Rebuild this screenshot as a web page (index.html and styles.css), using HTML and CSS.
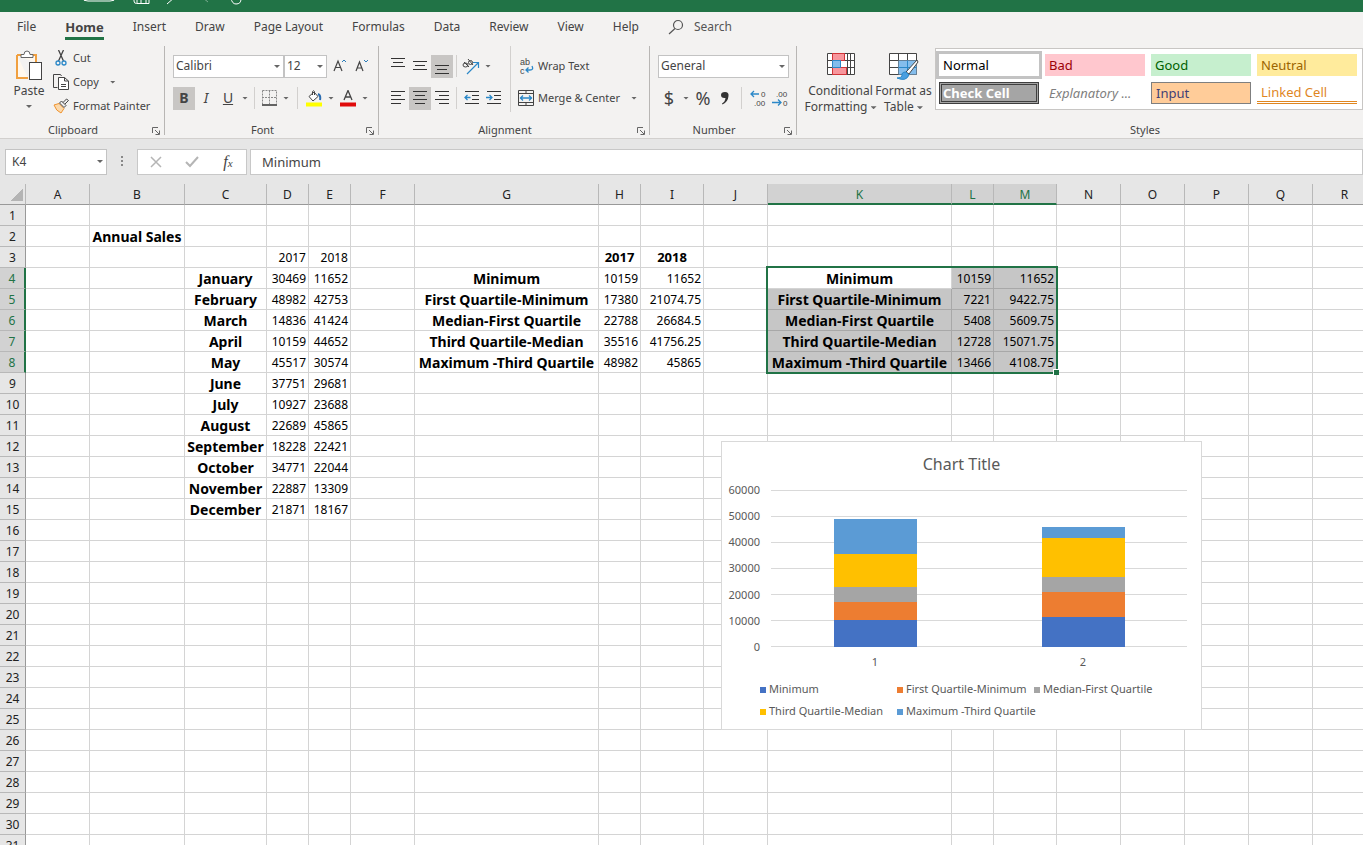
FILE: index.html
```html
<!DOCTYPE html>
<html lang="en">
<head>
<meta charset="utf-8">
<title>Annual Sales</title>
<link rel="stylesheet" href="styles.css">
</head>
<body>
<header class="titlebar">
  <svg class="quick-access" width="250" height="12" viewBox="0 0 250 12" fill="none" stroke="#fff">
    <path d="M82 -6V-2Q83 1 88 1H110Q115 1 116 -2"/>
    <path d="M134 -4V1Q134 3.500 136.500 3.500H149V-4M137 3V-1H146V3M141 3V0"/>
    <path d="M167 4L175 -3"/><path d="M203 -2l5 4" opacity=".4"/>
    <path d="M231 -2Q232 4 236 4Q241 4 241 -1"/>
  </svg>
</header>

<nav class="tabs">
  <button class="tab">File</button>
  <button class="tab active">Home</button>
  <button class="tab">Insert</button>
  <button class="tab">Draw</button>
  <button class="tab">Page Layout</button>
  <button class="tab">Formulas</button>
  <button class="tab">Data</button>
  <button class="tab">Review</button>
  <button class="tab">View</button>
  <button class="tab">Help</button>
  <button class="tab search"><svg width="16" height="16" viewBox="0 0 16 16" fill="none" stroke="#555" stroke-width="1.200"><circle cx="10" cy="6" r="4.500"/><path d="M7 9.500L1 15"/></svg>Search</button>
</nav>

<div class="ribbon">
  <section class="group clipboard">
    <div class="group-body">
      <button class="big paste">
        <svg width="28" height="31" viewBox="0 0 28 31" fill="none">
          <path d="M2 5H21V13M13 28H2V5" stroke="#f0a040" stroke-width="2" fill="#fff8ee"/>
          <path d="M6 7.500V4.500H9Q9 1 12 1Q15 1 15 4.500H18V7.500Z" fill="#fff" stroke="#666"/>
          <rect x="14.500" y="12.500" width="12" height="17" fill="#fff" stroke="#444"/>
        </svg>
        <span>Paste</span><i class="caret"></i>
      </button>
      <div class="stack">
        <button class="cmd"><svg width="16" height="16" viewBox="0 0 16 16" fill="none"><path d="M5.500 0L10.500 11M10.500 0L5.500 11" stroke="#444" stroke-width="1.300"/><circle cx="5" cy="13" r="2" stroke="#2b88c8" stroke-width="1.300"/><circle cx="11" cy="13" r="2" stroke="#2b88c8" stroke-width="1.300"/></svg>Cut</button>
        <button class="cmd"><svg width="16" height="16" viewBox="0 0 16 16" fill="none" stroke="#444"><path d="M4.500 13.500H.500V.500H7.500L8.500 2"/><path d="M5.500 3.500H11.500L15.500 7V15.500H5.500ZM11.500 3.500V7H15.500M8 10.500H13M8 12.500H13" fill="#fff"/></svg>Copy<i class="caret gap"></i></button>
        <button class="cmd"><svg width="16" height="16" viewBox="0 0 16 16" fill="none"><path d="M1 7L6 5.500L11 10.500L8 15Q3 13 1 7Z" fill="#fbd9ac" stroke="#ef9430"/><path d="M6.500 5L8.500 3L13 7.500L11 9.500ZM10 4.500L13.500 1L15.500 2.500L12 6" fill="#eee" stroke="#444"/></svg>Format Painter</button>
      </div>
    </div>
    <footer class="group-label"><span>Clipboard</span><svg class="launcher" width="8" height="8"><use href="#launch"/></svg></footer>
  </section>

  <section class="group font">
    <div class="group-body rows">
      <div class="row">
        <select class="box face" aria-label="Font"><option>Calibri</option></select>
        <select class="box size" aria-label="Font size"><option>12</option></select>
        <button class="icon grow" aria-label="Increase font size"><svg width="14" height="17" viewBox="0 0 14 17" fill="none"><path d="M1 13L5 3L9 13M2.500 9.500H7.500" stroke="#444" stroke-width="1.200"/><path d="M9 4L11 2L13 4" stroke="#2b7cb8"/></svg></button>
        <button class="icon" aria-label="Decrease font size"><svg width="14" height="17" viewBox="0 0 14 17" fill="none"><path d="M1 13L4.500 4L8 13M2.200 10H6.800" stroke="#444" stroke-width="1.200"/><path d="M9 2L11 4L13 2" stroke="#2b7cb8"/></svg></button>
      </div>
      <div class="row">
        <button class="icon on glyph"><b>B</b></button>
        <button class="icon glyph"><em>I</em></button>
        <button class="icon glyph"><u>U</u></button>
        <i class="caret"></i>
        <i class="rule"></i>
        <button class="icon" aria-label="Borders"><svg width="15" height="16" viewBox="0 0 15 16" fill="none"><path d="M.500 .500H14.500V14M.500 .500V14M7.500 .500V14M0 7.500H15" stroke="#888" stroke-dasharray="2 1"/><path d="M0 15H15" stroke="#333" stroke-width="1.500"/></svg></button>
        <i class="caret"></i>
        <i class="rule wide"></i>
        <button class="icon" aria-label="Fill color"><svg width="16" height="17" viewBox="0 0 16 17" fill="none"><path d="M3 6.500L8 2L12 6.500L7 11ZM6.500 5V1.500Q7.500 0 8.500 1.500V5" stroke="#444" fill="#fff"/><path d="M12 4Q15 5 14 10" stroke="#2b6cb0" stroke-width="2"/><path d="M0 12.500H16V16.500H0Z" fill="#ff0"/></svg></button>
        <i class="caret"></i>
        <button class="icon" aria-label="Font color"><svg width="16" height="17" viewBox="0 0 16 17" fill="none"><path d="M4 10L8 .500L12 10M5.500 7H10.500" stroke="#444" stroke-width="1.300"/><path d="M0 12.500H16V16.500H0Z" fill="#e00b0b"/></svg></button>
        <i class="caret"></i>
      </div>
    </div>
    <footer class="group-label"><span>Font</span><svg class="launcher" width="8" height="8"><use href="#launch"/></svg></footer>
  </section>

  <section class="group alignment">
    <div class="group-body">
      <div class="rows aligns">
        <div class="row">
          <button class="icon" aria-label="Top align"><svg width="14" height="16" viewBox="0 0 14 16" stroke="#333"><path d="M0 .500H14M2 4.500H12M0 8.500H14"/></svg></button>
          <button class="icon" aria-label="Middle align"><svg width="14" height="16" viewBox="0 0 14 16" stroke="#333"><path d="M0 3.500H14M2 7.500H12M0 11.500H14"/></svg></button>
          <button class="icon on" aria-label="Bottom align"><svg width="14" height="16" viewBox="0 0 14 16" stroke="#333"><path d="M0 7.500H14M2 11.500H12M0 15.500H14"/></svg></button>
          <i class="rule"></i>
          <button class="icon" aria-label="Orientation"><svg width="18" height="17" viewBox="0 0 18 17" fill="none"><g stroke="#444"><ellipse cx="3.500" cy="7" rx="2.500" ry="2"/><path d="M2 4L7 9M6 1L11 7"/><ellipse cx="8.500" cy="4.500" rx="2" ry="2"/></g><path d="M5 16L16 5M11 4.500H16.500V10" stroke="#2b88c8" stroke-width="1.200"/></svg></button>
          <i class="caret"></i>
        </div>
        <div class="row">
          <button class="icon" aria-label="Align left"><svg width="14" height="14" viewBox="0 0 14 14" stroke="#333"><path d="M0 .500H14M0 4.500H10M0 8.500H14M0 12.500H10"/></svg></button>
          <button class="icon on" aria-label="Center"><svg width="14" height="14" viewBox="0 0 14 14" stroke="#333"><path d="M0 .500H14M2 4.500H12M0 8.500H14M2 12.500H12"/></svg></button>
          <button class="icon" aria-label="Align right"><svg width="14" height="14" viewBox="0 0 14 14" stroke="#333"><path d="M0 .500H14M4 4.500H14M0 8.500H14M4 12.500H14"/></svg></button>
          <i class="rule"></i>
          <button class="icon" aria-label="Decrease indent"><svg width="15" height="14" viewBox="0 0 15 14" fill="none"><path d="M1 .500H15M8 4.500H15M8 8.500H15M1 12.500H15" stroke="#333"/><path d="M6.500 6.500H1M3.500 4L1 6.500L3.500 9" stroke="#2b88c8" stroke-width="1.300"/></svg></button>
          <button class="icon" aria-label="Increase indent"><svg width="15" height="14" viewBox="0 0 15 14" fill="none"><path d="M1 .500H15M8 4.500H15M8 8.500H15M1 12.500H15" stroke="#333"/><path d="M0 6.500H6M3.500 4L6 6.500L3.500 9" stroke="#2b88c8" stroke-width="1.300"/></svg></button>
        </div>
      </div>
      <div class="rows merges">
        <div class="row"><button class="cmd"><svg width="16" height="18" viewBox="0 0 16 18"><text class="tiny wrap" x="2" y="8">ab</text><text class="tiny wrap" x="2" y="17">c</text><path d="M14 9Q16 13 12 13H8M10.500 10.500L8 13L10.500 15.500" fill="none" stroke="#2b88c8" stroke-width="1.300"/></svg>Wrap Text</button></div>
        <div class="row"><button class="cmd"><svg width="16" height="16" viewBox="0 0 16 16" fill="none"><path d="M.500 .500H15.500V15.500H.500ZM.500 3.500H15.500M.500 12.500H15.500M8 0V4M8 12V16" stroke="#444"/><path d="M2 8H14M5 5.500L2.500 8L5 10.500M11 5.500L13.500 8L11 10.500" stroke="#2b88c8" stroke-width="1.300"/></svg>Merge &amp; Center<i class="caret gap"></i></button></div>
      </div>
    </div>
    <footer class="group-label"><span>Alignment</span><svg class="launcher" width="8" height="8"><use href="#launch"/></svg></footer>
  </section>

  <section class="group number">
    <div class="group-body rows">
      <div class="row"><select class="box format" aria-label="Number format"><option>General</option></select></div>
      <div class="row">
        <button class="icon sign">$</button>
        <i class="caret"></i>
        <button class="icon sign">%</button>
        <button class="icon" aria-label="Comma style"><svg width="8" height="14" viewBox="0 0 8 14"><path d="M0 4Q0 1 4 1Q8 1 7.500 5Q7 11 1.500 13.500L1 12.500Q4 11 4.500 7Q0 7.500 0 4Z" fill="#333"/></svg></button>
        <i class="rule wide"></i>
        <button class="icon" aria-label="Increase decimal"><svg width="16" height="18" viewBox="0 0 16 18"><text class="tiny" x="11" y="8">0</text><text class="tiny" x="4" y="17">.00</text><path d="M9 5H1M4 2L1 5L4 8" fill="none" stroke="#2b88c8" stroke-width="1.300"/></svg></button>
        <button class="icon" aria-label="Decrease decimal"><svg width="16" height="18" viewBox="0 0 16 18"><text class="tiny" x="4" y="8">.00</text><text class="tiny" x="11" y="17">0</text><path d="M0 13.500H9M6 10.500L9 13.500L6 16.500" fill="none" stroke="#2b88c8" stroke-width="1.300"/></svg></button>
      </div>
    </div>
    <footer class="group-label"><span>Number</span><svg class="launcher" width="8" height="8"><use href="#launch"/></svg></footer>
  </section>

  <section class="group styles">
    <div class="group-body">
      <button class="big">
        <svg width="28" height="28" viewBox="0 0 28 28" fill="#fff" stroke="#444"><path d="M.500 1.500H27.500V22.500H.500ZM.500 8.500H27.500M.500 15.500H27.500M5.500 1V23M20.500 1V23M23.500 1V23"/><path d="M5.500 1.500H17.500V8.500H5.500ZM5.500 15.500H19.500V22.500H5.500Z" fill="#f7969c" stroke="#d13438"/><path d="M5.500 8.500H13.500V15.500H5.500Z" fill="#84bdec" stroke="#2b88c8"/></svg>
        <span>Conditional<br>Formatting <i class="caret"></i></span>
      </button>
      <button class="big">
        <svg width="30" height="28" viewBox="0 0 30 28" fill="#fff" stroke="#444"><path d="M.500 1.500H27.500V22.500H.500ZM.500 8.500H27.500M.500 15.500H27.500M9.500 1V23M18.500 1V23"/><path d="M9.500 8.500H27.500V22.500H9.500Z" fill="#84bdec" stroke="none"/><path d="M9.500 15.500H27.500M18.500 8.500V22.500" stroke="#2b88c8"/><path d="M28 8L17 20L20 22L29 10Z"/><path d="M17 20Q12 20 13 24Q12 26 8 26Q17 30 20 23Z" fill="#4a9fe0" stroke="#2b88c8"/></svg>
        <span>Format as<br>Table <i class="caret"></i></span>
      </button>
      <div class="gallery">
        <button class="style normal">Normal</button>
        <button class="style bad">Bad</button>
        <button class="style good">Good</button>
        <button class="style neutral">Neutral</button>
        <button class="style check">Check Cell</button>
        <button class="style explain">Explanatory ...</button>
        <button class="style input">Input</button>
        <button class="style linked">Linked Cell</button>
      </div>
    </div>
    <footer class="group-label"><span>Styles</span></footer>
  </section>
</div>

<div class="formula-bar">
  <select class="name-box" aria-label="Name box"><option>K4</option></select>
  <svg class="grip" width="2" height="11" fill="#888"><path d="M0 0h2v2H0zM0 4h2v2H0zM0 8h2v2H0z"/></svg>
  <div class="entry-tools">
    <button class="icon" aria-label="Cancel"><svg width="12" height="12" viewBox="0 0 12 12" stroke="#b5b5b5" stroke-width="1.500"><path d="M1 1L11 11M11 1L1 11"/></svg></button>
    <button class="icon" aria-label="Enter"><svg width="14" height="12" viewBox="0 0 14 12" fill="none" stroke="#b5b5b5" stroke-width="2"><path d="M1 6L5 10L13 1"/></svg></button>
    <button class="icon fx" aria-label="Insert function"><i>f<small>x</small></i></button>
  </div>
  <input class="formula" aria-label="Formula" value="Minimum">
</div>

<main class="sheet">
  <table class="grid" id="grid"></table>
  <div class="selection"><i class="handle"></i></div>
  <figure class="chart">
    <figcaption class="chart-title">Chart Title</figcaption>
    <div class="plot" id="plot"></div>
    <ul class="legend">
      <li class="s0">Minimum</li>
      <li class="s1">First Quartile-Minimum</li>
      <li class="s2">Median-First Quartile</li>
      <li class="s3">Third Quartile-Median</li>
      <li class="s4">Maximum -Third Quartile</li>
    </ul>
  </figure>
</main>

<svg width="0" height="0" class="defs"><symbol id="launch" viewBox="0 0 8 8"><path d="M.500 6V.500H6M3 3L7 7M7.500 3.500V7.500H3.500" fill="none" stroke="#666"/></symbol></svg>
<script src="sheet.js"></script>
</body>
</html>
```

FILE: styles.css
```css
* { box-sizing: border-box; }
body {
  margin: 0;
  height: 100vh;
  overflow: hidden;
  display: flex;
  flex-direction: column;
  background: #e6e6e6;
  color: #444;
  font: 12px/16px "Noto Sans", "Open Sans", sans-serif;
}
button, select, input { font: inherit; color: inherit; margin: 0; border: 0; background: none; padding: 0; }
button { white-space: nowrap; }
svg { display: block; flex: none; }
.defs { position: absolute; }

.titlebar { height: 12px; flex: none; background: #217346; }

.tabs { display: flex; flex: none; height: 32px; padding-left: 17px; gap: 29px; background: #f3f2f1; }
.tab { height: 28px; padding-top: 4px; border-bottom: 3px solid transparent; }
.tab.active { font-size: 13px; font-weight: bold; border-color: #217346; }
.search { display: flex; align-items: center; gap: 10px; color: #555; }

.ribbon { display: flex; flex: none; background: #f3f2f1; height: 95px; padding-top: 2px; border-bottom: 1px solid #d2d0ce; }
.group { display: flex; flex-direction: column; flex: none; height: 89px; border-right: 1px solid #b8b6b4; }
.clipboard { width: 165px; }
.font { width: 214px; }
.alignment { width: 271px; }
.number { width: 147px; }
.styles { flex: 1; border: 0; min-width: 560px; }
.group-body { display: flex; flex: none; height: 76px; }
.styles .group-body { padding-left: 12px; }
.group-label { display: flex; flex: none; justify-content: center; position: relative; height: 16px; font-size: 11px; padding-right: 18px; }
.styles .group-label { padding-right: 0; padding-left: 130px; }
.launcher { position: absolute; right: 4px; top: 5px; }

.caret { display: inline-block; flex: none; width: 6px; height: 3px; background: #666; clip-path: polygon(0 0, 100% 0, 50% 100%); vertical-align: middle; }
.caret.gap { margin-left: 7px; }
.row > .caret { margin: 0 3px; }
.rule { width: 1px; height: 22px; background: #d2d0ce; margin: 0 3px; }
.rule.wide { margin: 0 5px; }

.big { display: flex; flex-direction: column; align-items: center; width: 63px; padding-top: 6px; gap: 3px; }
.big.paste { width: 53px; padding: 4px 0 0 5px; gap: 2px; }
.paste .caret { margin-top: 4px; }
.stack { display: flex; flex-direction: column; }
.cmd { display: flex; align-items: center; gap: 4px; height: 24px; font-size: 11px; }

.rows { display: flex; flex-direction: column; gap: 8px; padding: 8px 0 0 8px; }
.row { display: flex; align-items: center; height: 24px; }
.icon { display: flex; align-items: center; justify-content: center; flex: none; width: 22px; height: 23px; }
.on { background: #c8c6c4; }
.glyph { font-size: 14px; }
.box, .name-box {
  appearance: none;
  height: 23px;
  padding: 0 4px;
  border: 1px solid #c3c3c3;
  background: #fff url("data:image/svg+xml,%3Csvg xmlns='http://www.w3.org/2000/svg' width='6' height='3'%3E%3Cpath d='M0 0h6L3 3z' fill='%23666'/%3E%3C/svg%3E") no-repeat right 3px center;
}
.face { width: 111px; padding: 0 2px; }
.size { width: 43px; padding: 0 2px; }
.grow { margin-left: 2px; }
.aligns { flex: none; width: 132px; border-right: 1px solid #d2d0ce; height: 66px; }
.merges { padding-left: 7px; }
.format { width: 131px; padding: 0 2px; }
.sign { font-size: 18px; }

.gallery { display: grid; grid-template-columns: repeat(4, 100px); grid-auto-rows: 22px; gap: 6px; flex: 1; margin-top: 2px; height: 62px; padding: 5px 3px; background: #fff; border: 1px solid #c8c6c4; }
.style { text-align: left; padding: 0 4px; font-size: 13px; }
.normal { color: #000; outline: 3px solid #c3c3c3; }
.bad { background: #ffc7ce; color: #9c0006; }
.good { background: #c6efce; color: #006100; }
.neutral { background: #ffeb9c; color: #9c6500; }
.check { background: #a5a5a5; color: #fff; font-weight: bold; border: 3px double #3f3f3f; padding: 0 1px; }
.explain { color: #7f7f7f; font-style: italic; }
.input { background: #ffcc99; color: #3f3f76; border: 1px solid #7f7f7f; }
.linked { color: #e0861f; border-bottom: 3px double #e0861f; }

.formula-bar { display: flex; align-items: center; flex: none; height: 45px; padding-left: 5px; }
.name-box { width: 102px; height: 26px; padding: 0 6px; }
.grip { margin: 0 14px; }
.entry-tools { display: flex; align-items: center; justify-content: space-around; width: 110px; height: 26px; border: 1px solid #c8c8c8; background: #fff; }
.fx { font: italic 16px "Liberation Serif", serif; }
.fx small { font-size: 11px; }
.formula { flex: 1; min-width: 0; height: 26px; margin-left: 3px; padding: 0 11px; border: 1px solid #c8c8c8; background: #fff; font-size: 13px; }
.tiny { font: 8px "Liberation Sans", sans-serif; fill: #444; }
.tiny.wrap { font-size: 9px; }

.sheet { position: relative; flex: 1; overflow: hidden; background: #fff; }
.grid { width: 1377px; table-layout: fixed; border-collapse: separate; border-spacing: 0; color: #000; font-size: 12px; }
.grid th, .grid td { height: 21px; padding: 2px 2px 0 0; line-height: 18px; border-right: 1px solid #d4d4d4; border-bottom: 1px solid #d4d4d4; white-space: nowrap; text-align: right; }
.grid thead th, .grid tbody th { padding: 2px 0 0; background: #e6e6e6; color: #222; font-weight: normal; text-align: center; border-color: #b8b8b8; }
.grid thead th { height: 21px; border-bottom-color: #999; }
.grid tbody th { border-right-color: #999; }
.grid thead .corner { background: linear-gradient(135deg, #e6e6e6 50%, #b4b4b4 50%) 11px 5px / 12px 12px no-repeat #e6e6e6; }
.grid thead .hot { background: #d2d2d2; color: #217346; line-height: 17px; border-bottom: 2px solid #217346; }
.grid tbody .hot { background: #d2d2d2; color: #217346; border-right: 2px solid #217346; }
.grid td.label { font-weight: bold; text-align: center; padding: 1px 0 0; line-height: 19px; font-size: 14px; }
.grid td.year { font-size: 13px; }
.grid td.picked { background: #c6c6c6; border-color: #a8a8a8; }

.selection { position: absolute; left: 766px; top: 82px; width: 292px; height: 108px; border: 2px solid #217346; }
.handle { position: absolute; right: -3px; bottom: -3px; width: 6px; height: 6px; background: #217346; border: 1px solid #fff; border-width: 1px 0 0 1px; }

.chart { position: absolute; left: 721px; top: 257px; width: 481px; height: 289px; margin: 0; background: #fff; border: 1px solid #d9d9d9; color: #595959; font-size: 11px; }
.chart-title { margin-top: 11px; text-align: center; font-size: 16px; line-height: 22px; }
.plot { display: grid; grid-template-columns: 38px 1fr; grid-template-rows: 157px auto; column-gap: 11px; margin: 15px 14px 0 0; }
.axis { display: flex; flex-direction: column; justify-content: space-between; margin: -8px 0; text-align: right; }
.bars { display: flex; justify-content: space-around; background: repeating-linear-gradient(to top, #d9d9d9 0 1px, transparent 1px 26px); }
.bar { display: flex; flex-direction: column-reverse; width: 83px; height: 100%; }
.ticks { display: flex; grid-column: 2; justify-content: space-around; padding-top: 7px; }
.legend { display: grid; grid-template-columns: repeat(3, 137px); row-gap: 6px; list-style: none; margin: 11px 0 0 38px; padding: 0; white-space: nowrap; }
.legend li::before { content: ""; display: inline-block; width: 6px; height: 6px; margin-right: 3px; background: var(--c); }
.s0 { --c: #4472c4; }
.s1 { --c: #ed7d31; }
.s2 { --c: #a5a5a5; }
.s3 { --c: #ffc000; }
.s4 { --c: #5b9bd5; }
.segment { background: var(--c); }
```

FILE: sheet.js
```js
const widths = [26, 64, 95, 82, 42, 42, 64, 184, 42, 63, 64, 184, 42, 63, 64, 64, 64, 64, 64];
const letters = "ABCDEFGHIJKLMNOPQR".split("");
const months = [
  ["January", 30469, 11652], ["February", 48982, 42753], ["March", 14836, 41424],
  ["April", 10159, 44652], ["May", 45517, 30574], ["June", 37751, 29681],
  ["July", 10927, 23688], ["August", 22689, 45865], ["September", 18228, 22421],
  ["October", 34771, 22044], ["November", 22887, 13309], ["December", 21871, 18167]
];
const stats = [
  ["Minimum", 10159, 11652, 10159, 11652],
  ["First Quartile-Minimum", 17380, 21074.75, 7221, 9422.75],
  ["Median-First Quartile", 22788, 26684.5, 5408, 5609.75],
  ["Third Quartile-Median", 35516, 41756.25, 12728, 15071.75],
  ["Maximum -Third Quartile", 48982, 45865, 13466, 4108.75]
];
const cells = { B2: "Annual Sales", D3: 2017, E3: 2018, H3: "2017", I3: "2018" };
months.forEach(([name, a, b], i) => {
  cells["C" + (i + 4)] = name;
  cells["D" + (i + 4)] = a;
  cells["E" + (i + 4)] = b;
});
stats.forEach(([name, h, i, l, m], n) => {
  const row = n + 4;
  Object.assign(cells, { ["G" + row]: name, ["H" + row]: h, ["I" + row]: i, ["K" + row]: name, ["L" + row]: l, ["M" + row]: m });
});

const selectedColumn = c => "KLM".includes(c);
const selectedRow = r => r >= 4 && r <= 8;

let html = "<colgroup>" + widths.map(w => `<col style="width:${w}px">`).join("") + "</colgroup>";
html += '<thead><tr><th class="corner"></th>' +
  letters.map(c => `<th class="${selectedColumn(c) ? "hot" : ""}">${c}</th>`).join("") + "</tr></thead><tbody>";
for (let r = 1; r <= 31; r++) {
  html += `<tr><th class="${selectedRow(r) ? "hot" : ""}">${r}</th>`;
  for (const c of letters) {
    const value = cells[c + r] ?? "";
    const classes = [];
    if (typeof value === "string" && value) classes.push("label");
    if (typeof value === "string" && r === 3) classes.push("year");
    if (selectedColumn(c) && selectedRow(r) && c + r !== "K4") classes.push("picked");
    html += `<td class="${classes.join(" ")}">${value}</td>`;
  }
  html += "</tr>";
}
document.getElementById("grid").innerHTML = html + "</tbody>";

const max = 60000;
const ticks = [60000, 50000, 40000, 30000, 20000, 10000, 0];
const bar = k => '<div class="bar">' +
  stats.map((s, i) => `<div class="segment s${i}" style="height:${s[k] / max * 100}%"></div>`).join("") + "</div>";
document.getElementById("plot").innerHTML =
  '<div class="axis">' + ticks.map(t => `<span>${t}</span>`).join("") + "</div>" +
  '<div class="bars">' + bar(3) + bar(4) + "</div>" +
  '<div class="ticks"><span>1</span><span>2</span></div>';
```
